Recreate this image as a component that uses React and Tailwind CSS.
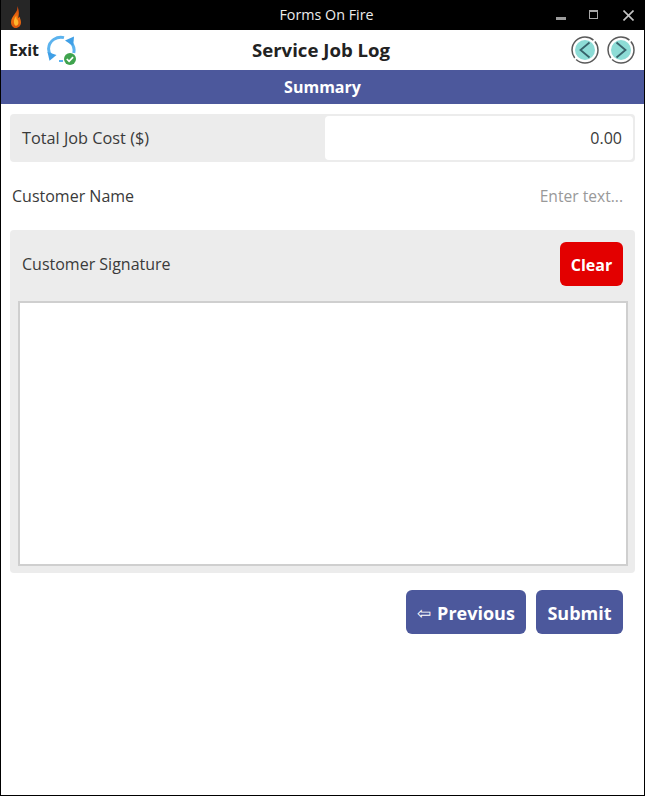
import React from "react";

function Flame() {
  return (
    <svg width="12" height="22" viewBox="0 0 12 22" className="block">
      <defs>
        <linearGradient id="fl" x1="0" y1="0" x2="0" y2="1">
          <stop offset="0" stopColor="#c9400c" />
          <stop offset="0.55" stopColor="#f0700f" />
          <stop offset="1" stopColor="#d9530c" />
        </linearGradient>
      </defs>
      <path d="M7 0c1 3.500-.5 5.500-2.300 8C3 10.500 1 12.500 1 16c0 3.500 2 6 4.700 6 3 0 5.300-2.500 5.300-5.500 0-2.500-1.200-4-1.300-6-.5.800-.9 1.200-1.500 1.500C9 8.500 9.500 4 7 0z" fill="url(#fl)" />
      <path d="M6.300 9.500c-1 2-2.600 4-2.400 6.700.2 2 1 3.500 2 3.500 1.500 0 2.500-1.400 2.500-3 0-1.700-.8-2.200-1-3.500-.3.300-.5.300-.7.100-.3-.9-.4-2.400-.4-3.800z" fill="#ffb52e" />
    </svg>
  );
}

function Sync() {
  return (
    <svg width="30" height="30" viewBox="0 0 30 30" className="block">
      <g fill="none" stroke="#5cb3ee" strokeWidth="3">
        <path d="M17 2.600C10 .8 2 5.500 1.600 13.500c-.1 2.500.6 4.500 2.200 6.500" />
        <path d="M23.500 7c3 3 4.300 6.500 3.300 11" />
      </g>
      <path d="M.5 17l9 3-7 5.700z" fill="#3f9fe6" />
      <path d="M18 5.500l9-4-.8 9.500z" fill="#3f9fe6" />
      <rect x="12" y="25" width="4" height="2" fill="#5cb3ee" />
      <circle cx="23" cy="24" r="6" fill="#3fa34d" />
      <path d="M19.800 24l2.300 2.300 4-4.200" fill="none" stroke="#fff" strokeWidth="1.700" />
    </svg>
  );
}

function NavBtn({ dir }) {
  return (
    <svg width="28" height="28" viewBox="0 0 28 28" className="block">
      <circle cx="14" cy="14" r="10" fill="#8ddcd6" />
      <circle
        cx="14"
        cy="14"
        r="13"
        fill="none"
        stroke="#5a5a5a"
        strokeWidth="1.500"
        strokeDasharray="38 2"
        strokeDashoffset="8"
      />
      <path
        d={dir === "l" ? "M18.500 6.500L9.500 14l9 7.500" : "M9.500 6.500l9 7.500-9 7.500"}
        fill="none"
        stroke="#37626a"
        strokeWidth="1.800"
      />
    </svg>
  );
}

export default function App() {
  return (
    <div className="w-[645px] h-[796px] bg-white border-x border-b border-black flex flex-col font-['Open_Sans','Noto_Sans',sans-serif] text-[#3a3a3a] overflow-hidden">
      <div className="h-[30px] shrink-0 bg-black flex items-center justify-between relative -mx-px">
        <div className="w-[30px] h-[30px] bg-[#262626] flex items-center justify-center pl-[1px] pt-[3px]">
          <Flame />
        </div>
        <div className="absolute left-[8px] right-0 text-center text-[14.300px] text-[#ececec] pointer-events-none">
          Forms On Fire
        </div>
        <div className="flex items-center pr-[11px]">
          <div className="w-[10px] h-[3px] bg-[#9c9c9c] mt-[7px]" />
          <div className="w-[9px] h-[9px] border border-[#a8a8a8] border-t-2 ml-[23px] mb-[1px]" />
          <svg width="11" height="11" viewBox="0 0 11 11" className="ml-[25px]">
            <path d="M.5.500l10 10M10.500.500l-10 10" stroke="#c4c4c4" strokeWidth="1.600" />
          </svg>
        </div>
      </div>

      <div className="h-[40px] shrink-0 flex items-center justify-between pl-[8px] pr-[9px] relative">
        <div className="flex items-center gap-[8px]">
          <span className="text-[16px] font-bold text-[#222]">Exit</span>
          <Sync />
        </div>
        <div className="absolute left-0 right-[3px] text-center text-[18.600px] font-bold text-[#222] pointer-events-none">
          Service Job Log
        </div>
        <div className="flex items-center gap-[8px]">
          <NavBtn dir="l" />
          <NavBtn dir="r" />
        </div>
      </div>

      <div className="h-[34px] shrink-0 bg-[#4c589c] text-white text-[16px] font-bold flex items-center justify-center">
        Summary
      </div>

      <div className="flex flex-col pl-[9px] pr-[9px]">
        <div className="mt-[10px] h-[48px] bg-[#ececec] rounded-[4px] flex items-center justify-between p-[2px] pl-[12px]">
          <span className="text-[16.300px]">Total Job Cost ($)</span>
          <div className="w-[308px] h-[44px] bg-white rounded-[4px] flex items-center justify-end pr-[11px] text-[16px]">
            0.00
          </div>
        </div>

        <div className="h-[68px] flex items-center justify-between pl-[2px] pr-[12px] pb-[1px]">
          <span className="text-[16px]">Customer Name</span>
          <span className="text-[15.600px] text-[#999] mt-[2px]">Enter text...</span>
        </div>

        <div className="bg-[#ececec] rounded-[4px] pl-[8px] pr-[7px] pt-[12px] pb-[7px]">
          <div className="h-[44px] flex items-center justify-between pl-[4px] pr-[5px]">
            <span className="text-[16px]">Customer Signature</span>
            <button className="w-[63px] h-[44px] bg-[#e30000] rounded-[6px] text-white text-[16px] font-bold pt-[1px]">
              Clear
            </button>
          </div>
          <div className="mt-[15px] h-[265px] bg-white border-2 border-[#cfcfcf]" />
        </div>

        <div className="mt-[17px] flex justify-end gap-[10px] mr-[12px]">
          <button className="w-[120px] h-[44px] bg-[#4c589c] rounded-[6px] text-white text-[18px] font-bold flex items-center justify-center gap-[6px] pt-[2px]">
            <span className="font-normal text-[17px]">⇦</span>
            Previous
          </button>
          <button className="w-[87px] h-[44px] bg-[#4c589c] rounded-[6px] text-white text-[18px] font-bold pt-[2px]">
            Submit
          </button>
        </div>
      </div>
    </div>
  );
}
